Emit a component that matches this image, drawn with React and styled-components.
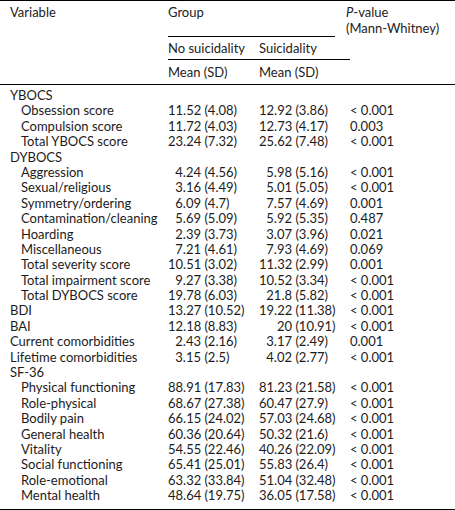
import React from "react";
import styled, { createGlobalStyle } from "styled-components";

const Global = createGlobalStyle`
  html, body { margin: 0; padding: 0; background: #fff; }
  body { font-family: Lato, "Open Sans", sans-serif; color: #1d1b1c; }
`;

const COLS = "168px 91px 87px 1fr";

const Table = styled.div`
  width: 455px;
  font-size: 13px;
  border-top: 1px solid #000;
  border-bottom: 1px solid #000;
`;

const Head = styled.div`
  display: grid;
  grid-template-columns: ${COLS};
  grid-template-rows: 36px 23px 24px;
  border-bottom: 1px solid #000;
`;

const VarHead = styled.div`
  grid-column: 1;
  grid-row: 1 / 4;
  padding: 4px 0 0 10px;
  line-height: 15px;
`;

const GroupHead = styled.div`
  grid-column: 2 / 4;
  grid-row: 1;
  margin-right: 11px;
  padding-top: 4px;
  line-height: 15px;
  border-bottom: 1px solid #000;
`;

const PHead = styled.div`
  grid-column: 4;
  grid-row: 1 / 3;
  padding-top: 3px;
  line-height: 16px;
  i { font-style: italic; }
`;

const SubLine = styled.div`
  grid-column: 2 / 4;
  grid-row: 2;
  margin-right: -4px;
  border-bottom: 1px solid #000;
`;

const SubHead = styled.div`
  grid-column: ${(p) => p.$col};
  grid-row: ${(p) => p.$row};
  display: flex;
  align-items: center;
  line-height: 15px;
  white-space: nowrap;
  z-index: 1;
`;

const Body = styled.div`
  padding: 3px 0 5px;
`;

const Row = styled.div`
  display: grid;
  grid-template-columns: ${COLS};
  height: 15.4px;
  line-height: 15.4px;
  white-space: nowrap;
`;

const Label = styled.div`
  padding-left: ${(p) => (p.$indent ? 21 : 10)}px;
`;

const NumCell = styled.div`
  display: flex;
`;

const Mean = styled.span`
  display: inline-block;
  width: 33px;
  text-align: right;
  margin-right: 3.4px;
`;

const PCell = styled.div`
  padding-left: 4px;
`;

const rows = [
  ["YBOCS"],
  ["Obsession score", "11.52 (4.08)", "12.92 (3.86)", "< 0.001", true],
  ["Compulsion score", "11.72 (4.03)", "12.73 (4.17)", "0.003", true],
  ["Total YBOCS score", "23.24 (7.32)", "25.62 (7.48)", "< 0.001", true],
  ["DYBOCS"],
  ["Aggression", "4.24 (4.56)", "5.98 (5.16)", "< 0.001", true],
  ["Sexual/religious", "3.16 (4.49)", "5.01 (5.05)", "< 0.001", true],
  ["Symmetry/ordering", "6.09 (4.7)", "7.57 (4.69)", "0.001", true],
  ["Contamination/cleaning", "5.69 (5.09)", "5.92 (5.35)", "0.487", true],
  ["Hoarding", "2.39 (3.73)", "3.07 (3.96)", "0.021", true],
  ["Miscellaneous", "7.21 (4.61)", "7.93 (4.69)", "0.069", true],
  ["Total severity score", "10.51 (3.02)", "11.32 (2.99)", "0.001", true],
  ["Total impairment score", "9.27 (3.38)", "10.52 (3.34)", "< 0.001", true],
  ["Total DYBOCS score", "19.78 (6.03)", "21.8 (5.82)", "< 0.001", true],
  ["BDI", "13.27 (10.52)", "19.22 (11.38)", "< 0.001", false],
  ["BAI", "12.18 (8.83)", "20 (10.91)", "< 0.001", false],
  ["Current comorbidities", "2.43 (2.16)", "3.17 (2.49)", "0.001", false],
  ["Lifetime comorbidities", "3.15 (2.5)", "4.02 (2.77)", "< 0.001", false],
  ["SF-36"],
  ["Physical functioning", "88.91 (17.83)", "81.23 (21.58)", "< 0.001", true],
  ["Role-physical", "68.67 (27.38)", "60.47 (27.9)", "< 0.001", true],
  ["Bodily pain", "66.15 (24.02)", "57.03 (24.68)", "< 0.001", true],
  ["General health", "60.36 (20.64)", "50.32 (21.6)", "< 0.001", true],
  ["Vitality", "54.55 (22.46)", "40.26 (22.09)", "< 0.001", true],
  ["Social functioning", "65.41 (25.01)", "55.83 (26.4)", "< 0.001", true],
  ["Role-emotional", "63.32 (33.84)", "51.04 (32.48)", "< 0.001", true],
  ["Mental health", "48.64 (19.75)", "36.05 (17.58)", "< 0.001", true],
];

function Num({ value }) {
  if (!value) return <NumCell />;
  const i = value.indexOf(" ");
  return (
    <NumCell>
      <Mean>{value.slice(0, i)}</Mean>
      <span>{value.slice(i + 1)}</span>
    </NumCell>
  );
}

export default function App() {
  return (
    <>
      <Global />
      <Table>
        <Head>
          <VarHead>Variable</VarHead>
          <GroupHead>Group</GroupHead>
          <PHead>
            <i>P</i>-value
            <br />
            (Mann-Whitney)
          </PHead>
          <SubLine />
          <SubHead $col={2} $row={2}>No suicidality</SubHead>
          <SubHead $col={3} $row={2}>Suicidality</SubHead>
          <SubHead $col={2} $row={3}>Mean (SD)</SubHead>
          <SubHead $col={3} $row={3}>Mean (SD)</SubHead>
        </Head>
        <Body>
          {rows.map(([label, a, b, p, indent]) => (
            <Row key={label}>
              <Label $indent={indent}>{label}</Label>
              <Num value={a} />
              <Num value={b} />
              <PCell>{p}</PCell>
            </Row>
          ))}
        </Body>
      </Table>
    </>
  );
}
